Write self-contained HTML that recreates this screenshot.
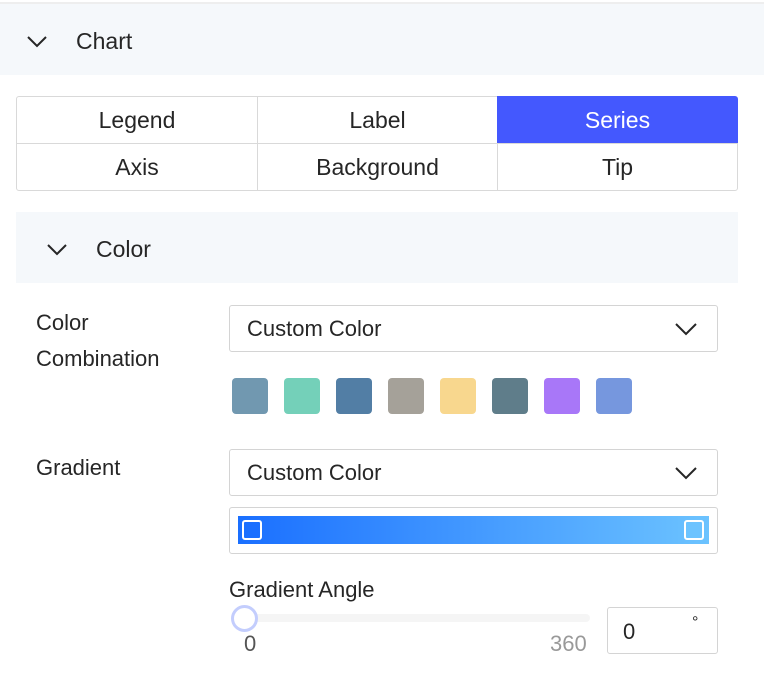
<!DOCTYPE html>
<html><head><style>
*{box-sizing:border-box;margin:0;padding:0}
body{width:764px;height:682px;background:#fff;font-family:"Liberation Sans",Arial,sans-serif;color:#262626;position:relative;overflow:hidden}
.a{position:absolute}
.hd{background:#f5f8fb}
.tab{position:absolute;border:1px solid #d9d9d9;text-align:center;font-size:23px;line-height:47px;background:#fff}
.sel{position:absolute;border:1px solid #d4d4d4;border-radius:3px;background:#fff}
.sw{position:absolute;top:378px;width:36px;height:36px;border-radius:4px}
</style></head><body>
<div class="a" style="left:0;top:2px;width:764px;height:2px;background:#eeeeee"></div>
<div class="a hd" style="left:0;top:4px;width:764px;height:71px"></div>
<svg class="a" style="left:26px;top:33px" width="22" height="16"><path d="M2 4 L11 13 L20 4" fill="none" stroke="#262626" stroke-width="2"/></svg>
<div class="a" style="left:76px;top:28px;font-size:23px">Chart</div>

<div class="tab" style="left:16px;top:96px;width:242px;height:48px;border-top-left-radius:3px">Legend</div>
<div class="tab" style="left:257px;top:96px;width:241px;height:48px">Label</div>
<div class="tab" style="left:497px;top:96px;width:241px;height:48px;background:#4458fe;border-color:#4458fe;color:#fff;border-top-right-radius:3px">Series</div>
<div class="tab" style="left:16px;top:143px;width:242px;height:48px;border-bottom-left-radius:3px">Axis</div>
<div class="tab" style="left:257px;top:143px;width:241px;height:48px">Background</div>
<div class="tab" style="left:497px;top:143px;width:241px;height:48px;border-bottom-right-radius:3px">Tip</div>

<div class="a hd" style="left:16px;top:212px;width:722px;height:71px"></div>
<svg class="a" style="left:46px;top:241px" width="22" height="16"><path d="M2 4 L11 13 L20 4" fill="none" stroke="#262626" stroke-width="2"/></svg>
<div class="a" style="left:96px;top:236px;font-size:23px">Color</div>

<div class="a" style="left:36px;top:305px;font-size:22px;line-height:36px">Color<br>Combination</div>
<div class="sel" style="left:229px;top:305px;width:489px;height:47px"></div>
<div class="a" style="left:247px;top:316px;font-size:22px">Custom Color</div>
<svg class="a" style="left:674px;top:321px" width="24" height="16"><path d="M2 3 L12 13 L22 3" fill="none" stroke="#262626" stroke-width="2"/></svg>

<div class="sw" style="left:232px;background:#7198b0"></div>
<div class="sw" style="left:284px;background:#74d0b9"></div>
<div class="sw" style="left:336px;background:#527ea5"></div>
<div class="sw" style="left:388px;background:#a5a199"></div>
<div class="sw" style="left:440px;background:#f8d78e"></div>
<div class="sw" style="left:492px;background:#5f7d8a"></div>
<div class="sw" style="left:544px;background:#a877f8"></div>
<div class="sw" style="left:596px;background:#7697de"></div>

<div class="a" style="left:36px;top:455px;font-size:22px">Gradient</div>
<div class="sel" style="left:229px;top:449px;width:489px;height:47px"></div>
<div class="a" style="left:247px;top:460px;font-size:22px">Custom Color</div>
<svg class="a" style="left:674px;top:465px" width="24" height="16"><path d="M2 3 L12 13 L22 3" fill="none" stroke="#262626" stroke-width="2"/></svg>

<div class="sel" style="left:229px;top:507px;width:489px;height:47px"></div>
<div class="a" style="left:238px;top:516px;width:471px;height:28px;background:linear-gradient(to right,#1a6fff,#6cc3ff)"></div>
<div class="a" style="left:242px;top:520px;width:20px;height:20px;border:2px solid #fff;border-radius:3px;background:#1a6fff"></div>
<div class="a" style="left:684px;top:520px;width:20px;height:20px;border:2px solid #fff;border-radius:3px;background:#6cc3ff"></div>

<div class="a" style="left:229px;top:577px;font-size:22px">Gradient Angle</div>
<div class="a" style="left:232px;top:614px;width:358px;height:8px;border-radius:4px;background:#f5f5f5"></div>
<div class="a" style="left:231px;top:605px;width:27px;height:27px;border-radius:50%;border:3px solid #c3cdfd;background:#fff"></div>
<div class="a" style="left:244px;top:631px;font-size:22px;color:#555">0</div>
<div class="a" style="left:550px;top:631px;font-size:22px;color:#999">360</div>
<div class="sel" style="left:607px;top:607px;width:111px;height:47px"></div>
<div class="a" style="left:623px;top:619px;font-size:22px">0</div>
<div class="a" style="left:692px;top:614px;font-size:16px">°</div>
</body></html>
